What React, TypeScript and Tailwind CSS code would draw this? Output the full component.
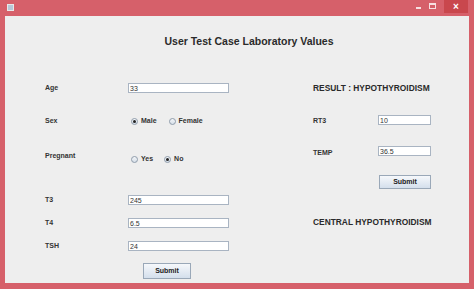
import type { ReactNode } from 'react';

const font = { fontFamily: '"Liberation Sans", Arial, sans-serif' };

function Field({ value, className }: { value: string; className: string }) {
  return (
    <div className={`flex h-[10px] items-center border border-[#a9b4c2] bg-white px-[1px] text-[7px] leading-none text-[#333] ${className}`}>
      {value}
    </div>
  );
}

function Radio({ label, checked }: { label: string; checked?: boolean }) {
  return (
    <div className="flex items-center gap-[3px]">
      <span className="flex h-[7px] w-[7px] items-center justify-center rounded-full border border-[#8f9cab] bg-gradient-to-b from-[#f4f6f8] to-[#d5dee8]">
        {checked && <span className="h-[3px] w-[3px] rounded-full bg-[#222]" />}
      </span>
      <span className="text-[7px] font-bold text-[#333]">{label}</span>
    </div>
  );
}

function SubmitButton({ className }: { className: string }) {
  return (
    <div className={`flex items-center justify-center border border-[#9aa8b8] bg-gradient-to-b from-[#f6f8fb] to-[#d4dfec] text-[7px] font-bold text-[#222] ${className}`}>
      Submit
    </div>
  );
}

function Row({ label, children, className = '', labelClass = '' }: { label: string; children: ReactNode; className?: string; labelClass?: string }) {
  return (
    <div className={`flex h-[20px] items-center ${className}`}>
      <span className={`w-[83px] text-[7px] font-bold text-[#333] ${labelClass}`}>{label}</span>
      {children}
    </div>
  );
}

export default function App() {
  return (
    <div className="flex h-[289px] w-[474px] flex-col bg-[#d6606a]" style={font}>
      {/* title bar */}
      <div className="flex h-[16px] items-start">
        <div className="ml-[7px] mt-[4px] h-[7px] w-[7px] border border-[#e8e8e8] bg-[#b8c8d8]" />
        <div className="flex-1" />
        <div className="mt-[7px] h-[2px] w-[5px] bg-white/80" />
        <div className="ml-[8px] mt-[3px] h-[6px] w-[7px] border border-white/80 border-t-2" />
        <div className="ml-[8px] flex h-[13px] w-[24px] items-center justify-center bg-[#c9474d] text-[10px] font-bold leading-none text-white">
          ×
        </div>
        <div className="w-[6px]" />
      </div>

      {/* content panel */}
      <div className="mx-[5px] mb-[6px] flex-1 bg-[#eeeeee] text-[#333]">
        <div className="pl-[24px] pt-[19px] text-center text-[10.5px] font-bold leading-[12px] text-[#2a2a2a]">
          User Test Case Laboratory Values
        </div>

        <div className="flex">
          {/* left column */}
          <div className="ml-[40px] mt-[31px] flex w-[240px] flex-col">
            <Row label="Age">
              <Field value="33" className="w-[101px]" />
            </Row>
            <Row label="Sex" className="mt-[13px]">
              <div className="ml-[3px] flex gap-[12px]">
                <Radio label="Male" checked />
                <Radio label="Female" />
              </div>
            </Row>
            <Row label="Pregnant" className="mt-[18px]" labelClass="mb-[6px]">
              <div className="ml-[3px] flex gap-[11px]">
                <Radio label="Yes" />
                <Radio label="No" checked />
              </div>
            </Row>
            <Row label="T3" className="mt-[21px]">
              <Field value="245" className="w-[101px]" />
            </Row>
            <Row label="T4" className="mt-[3px]">
              <Field value="6.5" className="w-[101px]" />
            </Row>
            <Row label="TSH" className="mt-[3px]">
              <Field value="24" className="w-[101px]" />
            </Row>
            <div className="mt-[7px] flex">
              <SubmitButton className="ml-[98px] h-[16px] w-[48px]" />
            </div>
          </div>

          {/* right column */}
          <div className="ml-[28px] mt-[31px] flex flex-col">
            <div className="flex h-[20px] items-center text-[8.4px] font-bold text-[#2a2a2a]">RESULT : HYPOTHYROIDISM</div>
            <div className="mt-[12px] flex h-[20px] items-center">
              <span className="mt-[2px] w-[65px] text-[7px] font-bold">RT3</span>
              <Field value="10" className="w-[53px]" />
            </div>
            <div className="mt-[11px] flex h-[20px] items-center">
              <span className="mt-[4px] w-[65px] text-[7px] font-bold">TEMP</span>
              <Field value="36.5" className="w-[53px]" />
            </div>
            <div className="mt-[14px] flex">
              <SubmitButton className="ml-[66px] h-[14px] w-[52px]" />
            </div>
            <div className="mt-[23px] flex h-[20px] items-center text-[8.4px] font-bold text-[#2a2a2a]">CENTRAL HYPOTHYROIDISM</div>
          </div>
        </div>
      </div>
    </div>
  );
}
